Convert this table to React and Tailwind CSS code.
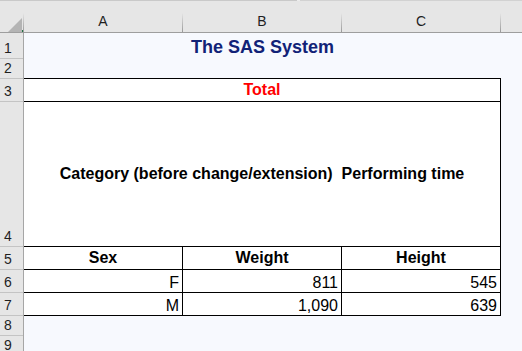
export default function App() {
  const rowHeads = [
    { n: "1", h: "h-[26px]" },
    { n: "2", h: "h-[20px]" },
    { n: "3", h: "h-[23px]" },
    { n: "4", h: "h-[145px]" },
    { n: "5", h: "h-[23px]" },
    { n: "6", h: "h-[23px]" },
    { n: "7", h: "h-[23px]" },
    { n: "8", h: "h-[20px]" },
    { n: "9", h: "h-[20px]" },
  ];
  const Sep = () => (
    <div className="w-[1px] h-[19px] self-end bg-gradient-to-b from-[#e6e6e6] to-[#9a9a9a] shrink-0" />
  );
  const data = [
    ["F", "811", "545"],
    ["M", "1,090", "639"],
  ];
  return (
    <div className="w-[522px] h-[351px] overflow-hidden bg-[#f7f9fe] font-['Liberation_Sans',Arial,sans-serif] flex flex-col text-[#1f1f1f]">
      {/* top strip */}
      <div className="h-[1px] shrink-0 flex">
        <div className="w-[297px] bg-[#c9c9c9]" />
        <div className="w-[3px] bg-[#ececec]" />
        <div className="flex-1 bg-[#d2d2d2]" />
      </div>
      {/* column headers */}
      <div className="h-[32px] shrink-0 flex bg-[#e6e6e6] border-b border-[#9e9e9e]">
        <div className="w-[24px] flex shrink-0">
          <div className="flex-1 flex items-end justify-end">
            <svg width="15" height="14" viewBox="0 0 15 14">
              <polygon points="14,0 14,14 0,14" fill="#b4b4b4" />
              <rect x="14" y="12" width="1" height="2" fill="#217346" />
            </svg>
          </div>
          <Sep />
        </div>
        {["A", "B", "C"].map((c) => (
          <div key={c} className="w-[159px] flex shrink-0">
            <div className="flex-1 flex items-end justify-center pb-[3px] text-[14px] leading-[16px]">
              {c}
            </div>
            <Sep />
          </div>
        ))}
        <div className="flex-1" />
      </div>
      {/* body */}
      <div className="flex-1 flex">
        <div className="w-[24px] shrink-0 flex flex-col bg-[#e6e6e6] border-r border-[#a6a6a6]">
          {rowHeads.map((r) => (
            <div
              key={r.n}
              className={`${r.h} shrink-0 flex items-end pl-[4px] pb-[2px] text-[14px] leading-[16px] border-b border-[#c4c4c4]`}
            >
              {r.n}
            </div>
          ))}
        </div>
        <div className="flex-1 flex flex-col">
          <div className="w-[477px] h-[25px] flex items-end justify-center pb-[1px] text-[18px] leading-[20px] font-bold text-[#112277]">
            The SAS System
          </div>
          <div className="h-[20px]" />
          <div className="w-[477px] flex flex-col bg-white border-t border-r border-black text-black text-[16px] leading-[18px]">
            <div className="h-[23px] flex items-center justify-center border-b border-black font-bold text-[#ff0000]">
              Total
            </div>
            <div className="h-[145px] flex items-center justify-center border-b border-black font-bold whitespace-pre">
              {"Category (before change/extension)  Performing time"}
            </div>
            <div className="h-[23px] flex border-b border-black font-bold">
              <div className="w-[159px] border-r border-black flex items-center justify-center">Sex</div>
              <div className="w-[159px] border-r border-black flex items-center justify-center">Weight</div>
              <div className="flex-1 flex items-center justify-center">Height</div>
            </div>
            {data.map((row) => (
              <div key={row[0]} className="h-[23px] flex border-b border-black">
                <div className="w-[159px] border-r border-black flex items-end justify-end pr-[3px]">{row[0]}</div>
                <div className="w-[159px] border-r border-black flex items-end justify-end pr-[3px]">{row[1]}</div>
                <div className="flex-1 flex items-end justify-end pr-[3px]">{row[2]}</div>
              </div>
            ))}
          </div>
        </div>
      </div>
    </div>
  );
}
